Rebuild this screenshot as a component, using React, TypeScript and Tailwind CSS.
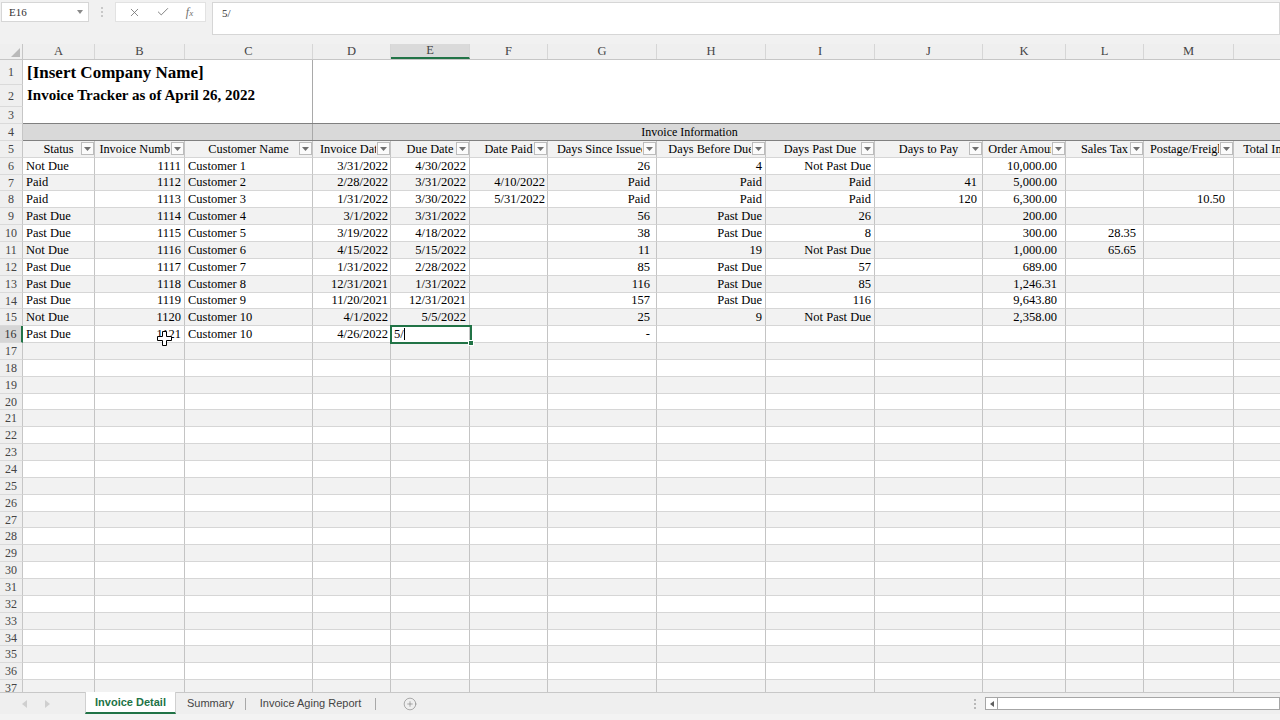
import React from 'react';
import { X, Check, CirclePlus } from 'lucide-react';

// column widths A..N
const W = [
  'w-[72px]', 'w-[90px]', 'w-[128px]', 'w-[78px]', 'w-[79px]', 'w-[78px]', 'w-[109px]',
  'w-[109px]', 'w-[109px]', 'w-[108px]', 'w-[83px]', 'w-[78px]', 'w-[90px]', 'w-[127px]',
];

// alignment + padding for data cells
const AL = [
  'justify-start pl-[3px]', 'justify-end pr-[3px]', 'justify-start pl-[3px]', 'justify-end pr-[2px]',
  'justify-end pr-[3px]', 'justify-end pr-[2px]', 'justify-end pr-[6px]', 'justify-end pr-[3px]',
  'justify-end pr-[3px]', 'justify-end pr-[5px]', 'justify-end pr-[8px]', 'justify-end pr-[7px]',
  'justify-end pr-[8px]', 'justify-end pr-[3px]',
];

const LETTERS = ['A', 'B', 'C', 'D', 'E', 'F', 'G', 'H', 'I', 'J', 'K', 'L', 'M', 'N'];

const HEADERS = [
  'Status', 'Invoice Number', 'Customer Name', 'Invoice Date', 'Due Date', 'Date Paid',
  'Days Since Issued', 'Days Before Due', 'Days Past Due', 'Days to Pay', 'Order Amount',
  'Sales Tax', 'Postage/Freight', 'Total Invoice Amount',
];

const DATA: string[][] = [
  ['Not Due', '1111', 'Customer 1', '3/31/2022', '4/30/2022', '', '26', '4', 'Not Past Due', '', '10,000.00', '', ''],
  ['Paid', '1112', 'Customer 2', '2/28/2022', '3/31/2022', '4/10/2022', 'Paid', 'Paid', 'Paid', '41', '5,000.00', '', ''],
  ['Paid', '1113', 'Customer 3', '1/31/2022', '3/30/2022', '5/31/2022', 'Paid', 'Paid', 'Paid', '120', '6,300.00', '', '10.50'],
  ['Past Due', '1114', 'Customer 4', '3/1/2022', '3/31/2022', '', '56', 'Past Due', '26', '', '200.00', '', ''],
  ['Past Due', '1115', 'Customer 5', '3/19/2022', '4/18/2022', '', '38', 'Past Due', '8', '', '300.00', '28.35', ''],
  ['Not Due', '1116', 'Customer 6', '4/15/2022', '5/15/2022', '', '11', '19', 'Not Past Due', '', '1,000.00', '65.65', ''],
  ['Past Due', '1117', 'Customer 7', '1/31/2022', '2/28/2022', '', '85', 'Past Due', '57', '', '689.00', '', ''],
  ['Past Due', '1118', 'Customer 8', '12/31/2021', '1/31/2022', '', '116', 'Past Due', '85', '', '1,246.31', '', ''],
  ['Past Due', '1119', 'Customer 9', '11/20/2021', '12/31/2021', '', '157', 'Past Due', '116', '', '9,643.80', '', ''],
  ['Not Due', '1120', 'Customer 10', '4/1/2022', '5/5/2022', '', '25', '9', 'Not Past Due', '', '2,358.00', '', ''],
  ['Past Due', '1121', 'Customer 10', '4/26/2022', '', '', '-', '', '', '', '', '', ''],
];

// rows are ~16.85px tall in the shot, so alternate 17/16
const rowTall = (n: number) =>
  Math.round(124 + (n - 3) * 16.85) - Math.round(124 + (n - 4) * 16.85) === 17;

function RowNum({ n, sel }: { n: number; sel?: boolean }) {
  return (
    <div
      className={`w-[23px] shrink-0 flex items-center justify-center border-b border-b-[#dadada] text-[12px] ${
        sel ? 'bg-[#d6d6d6] border-r-2 border-r-[#217346] text-[#333]' : 'bg-[#efefef] border-r border-r-[#c6c6c6] text-[#444]'
      }`}
    >
      {n}
    </div>
  );
}

function FilterBtn() {
  return (
    <div className="absolute right-0 top-[1px] w-[13px] h-[13px] border border-[#bcbcbc] bg-[#fbfbfb] shadow-[-1px_0_0_#f2f2f2] flex items-center justify-center">
      <svg width="7" height="4" viewBox="0 0 7 4">
        <path d="M0 0H7L3.5 4Z" fill="#707070" />
      </svg>
    </div>
  );
}

function GridRow({ n, cells }: { n: number; cells: string[] }) {
  const band = n % 2 === 1 ? 'bg-[#f2f2f2]' : 'bg-white';
  return (
    <div className={`flex ${rowTall(n) ? 'h-[17px]' : 'h-[16px]'}`}>
      <RowNum n={n} sel={n === 16} />
      {W.map((w, i) => {
        const editing = n === 16 && i === 4;
        return (
          <div
            key={i}
            className={`${w} ${editing ? 'justify-start pl-[3px]' : AL[i]} ${band} shrink-0 flex items-center overflow-hidden whitespace-nowrap border-r border-b border-r-[#c4c4c4] border-b-[#d6d6d6] text-[12.5px]`}
          >
            {editing ? (
              <span className="flex items-center">
                5/<span className="w-px h-[12px] bg-black" />
              </span>
            ) : (
              cells[i] || ''
            )}
          </div>
        );
      })}
    </div>
  );
}

export default function App() {
  const empty: number[] = [];
  for (let n = 17; n <= 40; n++) empty.push(n);

  return (
    <div className="w-[1280px] h-[720px] overflow-hidden flex flex-col bg-[#f1f1f1] text-black font-['Liberation_Serif',serif]">
      {/* formula bar */}
      <div className="h-[44px] shrink-0 flex items-start">
        <div className="ml-[1px] mt-[2px] w-[88px] h-[20px] bg-white border border-[#d6d6d6] flex items-center justify-between pl-[7px] pr-[5px] text-[11px] text-[#333]">
          <span>E16</span>
          <svg width="6" height="4" viewBox="0 0 6 4">
            <path d="M0 0H6L3 4Z" fill="#8a8a8a" />
          </svg>
        </div>
        <div className="w-[26px] h-[24px] flex flex-col items-center justify-center gap-[2px]">
          <span className="w-[2px] h-[2px] bg-[#c8c8c8]" />
          <span className="w-[2px] h-[2px] bg-[#c8c8c8]" />
          <span className="w-[2px] h-[2px] bg-[#c8c8c8]" />
        </div>
        <div className="mt-[2px] w-[91px] h-[20px] bg-white border border-[#e2e2e2] flex items-center justify-around px-[4px] text-[#707070]">
          <X size={13} strokeWidth={1.5} />
          <Check size={14} strokeWidth={1.5} />
          <span className="italic text-[12px] leading-none">
            f<span className="text-[9px]">x</span>
          </span>
        </div>
        <div className="ml-[6px] mt-[2px] flex-1 h-[33px] bg-white border border-[#d6d6d6] pl-[9px] pt-[2px] text-[11px] text-[#333]">
          5/
        </div>
      </div>

      {/* sheet */}
      <div className="flex-1 overflow-hidden relative bg-white">
        {/* column letters */}
        <div className="flex h-[16px] bg-[#efefef] border-b border-[#c6c6c6]">
          <div className="w-[23px] shrink-0 relative border-r border-[#c6c6c6]">
            <svg className="absolute right-[2px] bottom-[2px]" width="9" height="9" viewBox="0 0 9 9">
              <path d="M9 0V9H0Z" fill="#b9b9b9" />
            </svg>
          </div>
          {LETTERS.map((l, i) => (
            <div
              key={l}
              className={`${W[i]} shrink-0 flex items-center justify-center border-r border-r-[#d6d6d6] text-[12.5px] text-[#444] ${
                i === 4 ? 'bg-[#dadada] border-b-2 border-b-[#217346]' : ''
              }`}
            >
              {l}
            </div>
          ))}
        </div>

        {/* rows 1-3 */}
        <div className="flex h-[25px]">
          <RowNum n={1} />
          <div className="w-[290px] shrink-0 border-r border-[#a9a9a9] flex items-center pl-[4px] pt-[1px] font-bold text-[17px] whitespace-nowrap">
            [Insert Company Name]
          </div>
        </div>
        <div className="flex h-[22px]">
          <RowNum n={2} />
          <div className="w-[290px] shrink-0 border-r border-[#a9a9a9] flex items-center pl-[4px] pb-[1px] font-bold text-[15px] whitespace-nowrap">
            Invoice Tracker as of April 26, 2022
          </div>
        </div>
        <div className="flex h-[17px]">
          <RowNum n={3} />
          <div className="flex-1 flex border-b border-[#808080]">
            <div className="w-[290px] shrink-0 border-r border-[#a9a9a9]" />
          </div>
        </div>

        {/* row 4 */}
        <div className="flex h-[17px]">
          <RowNum n={4} />
          <div className="flex-1 flex bg-[#d9d9d9] border-b border-[#808080]">
            <div className="w-[290px] shrink-0 border-r border-[#a9a9a9]" />
            <div className="w-[753px] shrink-0 flex items-center justify-center text-[12px]">Invoice Information</div>
          </div>
        </div>

        {/* row 5: table headers */}
        <div className="flex h-[17px]">
          <RowNum n={5} />
          {W.map((w, i) => (
            <div
              key={i}
              className={`${w} shrink-0 relative flex items-center justify-center overflow-hidden whitespace-nowrap bg-[#f2f2f2] border-r border-b border-r-[#c4c4c4] border-b-[#d6d6d6] text-[12.3px]`}
            >
              <span>{HEADERS[i]}</span>
              <FilterBtn />
            </div>
          ))}
        </div>

        {DATA.map((r, idx) => (
          <GridRow key={idx} n={idx + 6} cells={r} />
        ))}
        {empty.map((n) => (
          <GridRow key={n} n={n} cells={[]} />
        ))}

        {/* active cell E16 */}
        <div className="absolute left-[390px] top-[281px] w-[82px] h-[19px] border-2 border-[#217346] pointer-events-none">
          <div className="absolute -right-[4px] -bottom-[4px] w-[6px] h-[6px] bg-[#217346] border border-white" />
        </div>

        {/* mouse cursor over B16 */}
        <svg className="absolute left-[157px] top-[287px]" width="15" height="15" viewBox="0 0 15 15">
          <path
            d="M5.5 0.5H9.5V5.5H14.5V9.5H9.5V14.5H5.5V9.5H0.5V5.5H5.5Z"
            fill="white"
            stroke="black"
            strokeWidth="1"
          />
        </svg>
      </div>

      {/* sheet tabs */}
      <div className="h-[22px] shrink-0 flex items-stretch bg-[#efefef] border-t border-[#c8c8c8] font-['Liberation_Sans',sans-serif] text-[11px] text-[#444]">
        <div className="w-[85px] shrink-0 flex items-center pl-[22px] gap-[18px]">
          <svg width="5" height="8" viewBox="0 0 5 8">
            <path d="M5 0V8L0 4Z" fill="#cfcfcf" />
          </svg>
          <svg width="5" height="8" viewBox="0 0 5 8">
            <path d="M0 0V8L5 4Z" fill="#cfcfcf" />
          </svg>
        </div>
        <div className="w-[91px] shrink-0 -mt-px flex items-center justify-center bg-white border-b-2 border-[#217346] border-x border-x-[#d0d0d0] font-bold text-[#217346]">
          Invoice Detail
        </div>
        <div className="w-[69px] shrink-0 flex items-center justify-center">Summary</div>
        <div className="w-px h-[12px] self-center bg-[#a8a8a8]" />
        <div className="w-[129px] shrink-0 flex items-center justify-center">Invoice Aging Report</div>
        <div className="w-px h-[12px] self-center bg-[#a8a8a8]" />
        <div className="w-[67px] shrink-0 flex items-center justify-center text-[#777]">
          <CirclePlus size={14} strokeWidth={1} />
        </div>
        <div className="flex-1" />
        <div className="w-[14px] shrink-0 flex flex-col items-center justify-center gap-[2px]">
          <span className="w-[2px] h-[2px] bg-[#b8b8b8]" />
          <span className="w-[2px] h-[2px] bg-[#b8b8b8]" />
          <span className="w-[2px] h-[2px] bg-[#b8b8b8]" />
        </div>
        <div className="w-[295px] shrink-0 ml-[3px] my-[4px] flex bg-white border border-[#a6a6a6]">
          <div className="w-[12px] border-r border-[#a6a6a6] flex items-center justify-center">
            <svg width="4" height="6" viewBox="0 0 4 6">
              <path d="M4 0V6L0 3Z" fill="#606060" />
            </svg>
          </div>
        </div>
      </div>
      <div className="h-[6px] shrink-0 bg-[#f3f3f3]" />
    </div>
  );
}
